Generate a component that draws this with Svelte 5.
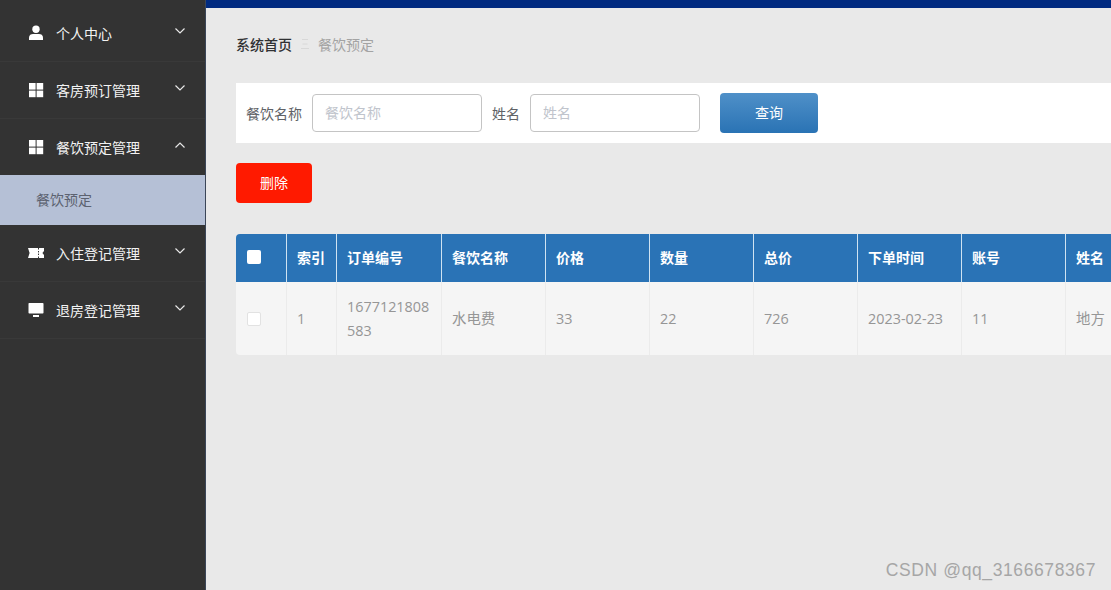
<script>
  const menus = [
    { name: "个人中心", icon: "user" },
    { name: "客房预订管理", icon: "grid" },
    { name: "餐饮预定管理", icon: "grid", open: true, children: ["餐饮预定"] },
    { name: "入住登记管理", icon: "ticket" },
    { name: "退房登记管理", icon: "screen" }
  ];

  const columns = ["索引", "订单编号", "餐饮名称", "价格", "数量", "总价", "下单时间", "账号", "姓名"];
  const row = ["1", "1677121808583", "水电费", "33", "22", "726", "2023-02-23", "11", "地方"];
</script>

<div class="page">
  <aside class="sidebar">
    {#each menus as menu}
      <div class="menu-item">
        <svg class="menu-icon" viewBox="0 0 16 16" width="16" height="16" fill="#fff">
          {#if menu.icon === "user"}
            <circle cx="8" cy="4.2" r="3.7" />
            <path d="M1 15v-2.6C1 10.2 3 9 5 9h6c2 0 4 1.2 4 3.4V15z" />
          {:else if menu.icon === "grid"}
            <rect x="1" y="1" width="6.6" height="6.6" />
            <rect x="8.6" y="1" width="6.6" height="6.6" />
            <rect x="1" y="8.6" width="6.6" height="6.6" />
            <rect x="8.6" y="8.6" width="6.6" height="6.6" />
          {:else if menu.icon === "ticket"}
            <path d="M0 3h10v1.4h1V3h5v3l-1.6 2L16 10v3h-5v-1.4h-1V13H0l1.6-5z" />
            <rect x="10" y="6" width="1" height="1.4" fill="#333" />
            <rect x="10" y="8.6" width="1" height="1.4" fill="#333" />
          {:else}
            <rect x="0.5" y="1" width="15" height="10.6" rx="0.8" />
            <rect x="5" y="13" width="6" height="2" />
          {/if}
        </svg>
        <span class="menu-name">{menu.name}</span>
        <svg class="arrow" viewBox="0 0 10 6" width="10" height="6" fill="none" stroke="#e8e8e8" stroke-width="1.2">
          {#if menu.open}
            <path d="M0.5 5.5L5 1l4.5 4.5" />
          {:else}
            <path d="M0.5 0.5L5 5l4.5-4.5" />
          {/if}
        </svg>
      </div>
      {#if menu.children}
        {#each menu.children as child}
          <div class="sub-item">{child}</div>
        {/each}
      {/if}
    {/each}
  </aside>

  <main class="content">
    <div class="topbar"></div>
    <div class="body">
      <div class="breadcrumb">
        <span class="crumb-home">系统首页</span>
        <svg class="crumb-sep" viewBox="0 0 8 12" width="8" height="12" fill="none" stroke="#d8d8d8" stroke-width="1">
          <path d="M1 1.5h6M1.5 6h5M0 10.5h8" />
        </svg>
        <span class="crumb-current">餐饮预定</span>
      </div>

      <div class="search-panel">
        <label class="field-label" for="dish">餐饮名称</label>
        <input id="dish" class="field" placeholder="餐饮名称" />
        <label class="field-label" for="person">姓名</label>
        <input id="person" class="field" placeholder="姓名" />
        <button class="btn-search">查询</button>
      </div>

      <button class="btn-delete">删除</button>

      <table class="data-table">
        <colgroup>
          <col style="width: 51px" />
          <col style="width: 50px" />
          <col style="width: 105px" />
          <col style="width: 104px" />
          <col style="width: 104px" />
          <col style="width: 104px" />
          <col style="width: 104px" />
          <col style="width: 104px" />
          <col style="width: 104px" />
          <col style="width: 104px" />
        </colgroup>
        <thead>
          <tr>
            <th><span class="check check-head"></span></th>
            {#each columns as col}
              <th>{col}</th>
            {/each}
          </tr>
        </thead>
        <tbody>
          <tr>
            <td><span class="check"></span></td>
            {#each row as cell}
              <td>{cell}</td>
            {/each}
          </tr>
        </tbody>
      </table>
    </div>
    <div class="watermark">CSDN @qq_3166678367</div>
  </main>
</div>

<style>
  :global(body) {
    margin: 0;
    overflow: hidden;
    font-family: "Noto Sans CJK SC", "Liberation Sans", sans-serif;
  }

  .page {
    display: flex;
    width: 1111px;
    height: 590px;
    overflow: hidden;
    background: #e9e9e9;
  }

  .sidebar {
    flex: 0 0 206px;
    box-sizing: border-box;
    padding-top: 5px;
    background: #333333;
    border-right: 1px solid #3b4658;
  }

  .menu-item {
    display: flex;
    align-items: center;
    box-sizing: border-box;
    height: 57px;
    padding: 0 20px 0 28px;
    border-bottom: 1px solid #393939;
    color: #f2f2f2;
    font-size: 14px;
  }

  .menu-icon {
    flex: none;
    margin-right: 12px;
  }

  .menu-name {
    flex: 1;
  }

  .arrow {
    margin-top: -5px;
  }

  .sub-item {
    box-sizing: border-box;
    height: 50px;
    margin-top: -1px;
    padding-left: 36px;
    line-height: 48px;
    background: #b5c0d6;
    color: #5c6270;
    font-size: 14px;
  }

  .content {
    position: relative;
    flex: 1;
    min-width: 0;
    overflow: hidden;
  }

  .topbar {
    height: 8px;
    background: #002a80;
  }

  .body {
    padding: 0 0 0 30px;
  }

  .breadcrumb {
    display: flex;
    align-items: center;
    gap: 9px;
    height: 20px;
    padding-top: 26px;
    padding-bottom: 1px;
    font-size: 14px;
  }

  .crumb-home {
    color: #303133;
    font-weight: 500;
  }

  .crumb-sep {
    flex: none;
  }

  .crumb-current {
    color: #a3a3a3;
  }

  .search-panel {
    display: flex;
    align-items: center;
    width: 900px;
    height: 60px;
    margin-top: 28px;
    padding-left: 10px;
    background: #ffffff;
  }

  .field-label {
    margin-right: 10px;
    padding-bottom: 1px;
    color: #606266;
    font-size: 14px;
  }

  .field {
    box-sizing: border-box;
    width: 170px;
    height: 38px;
    margin-right: 10px;
    padding: 0 12px 2px;
    border: 1px solid #c4c4c4;
    border-radius: 4px;
    background: #ffffff;
    font-family: inherit;
    font-size: 14px;
  }

  .field::placeholder {
    color: #c0c4cc;
  }

  .btn-search {
    width: 98px;
    height: 40px;
    margin-left: 10px;
    padding: 0 0 2px;
    border: none;
    border-radius: 4px;
    background: linear-gradient(#4f90c8, #2a73b4);
    color: #ffffff;
    font-family: inherit;
    font-size: 14px;
  }

  .btn-delete {
    display: block;
    width: 76px;
    height: 40px;
    margin-top: 20px;
    padding: 0 0 2px;
    border: none;
    border-radius: 4px;
    background: #ff1a00;
    color: #ffffff;
    font-family: inherit;
    font-size: 14px;
  }

  .data-table {
    table-layout: fixed;
    width: 934px;
    margin-top: 31px;
    border-collapse: separate;
    border-spacing: 0;
    font-size: 14px;
  }

  th {
    box-sizing: border-box;
    height: 48px;
    padding: 0 10px 2px;
    background: #2a73b6;
    border-right: 1px solid #cfe3f2;
    color: #ffffff;
    font-weight: 700;
    text-align: left;
  }

  th:first-child {
    border-top-left-radius: 4px;
  }

  td {
    box-sizing: border-box;
    height: 73px;
    padding: 0 10px;
    background: #f5f5f5;
    border-right: 1px solid #ebebeb;
    color: #969696;
    font-family: "Open Sans", "Noto Sans CJK SC", sans-serif;
    font-size: 14.4px;
    line-height: 24px;
    word-break: break-all;
  }

  tbody td:first-child {
    border-bottom-left-radius: 4px;
  }

  .check {
    display: block;
    box-sizing: border-box;
    width: 14px;
    height: 14px;
    margin-left: 1px;
    border: 1px solid #e2e2e2;
    border-radius: 2px;
    background: #ffffff;
  }

  .check-head {
    border: none;
  }

  .watermark {
    position: absolute;
    right: 15px;
    bottom: 9px;
    color: #a6a6a6;
    font-family: "Liberation Sans", sans-serif;
    font-size: 17.5px;
    letter-spacing: 0.6px;
  }
</style>
